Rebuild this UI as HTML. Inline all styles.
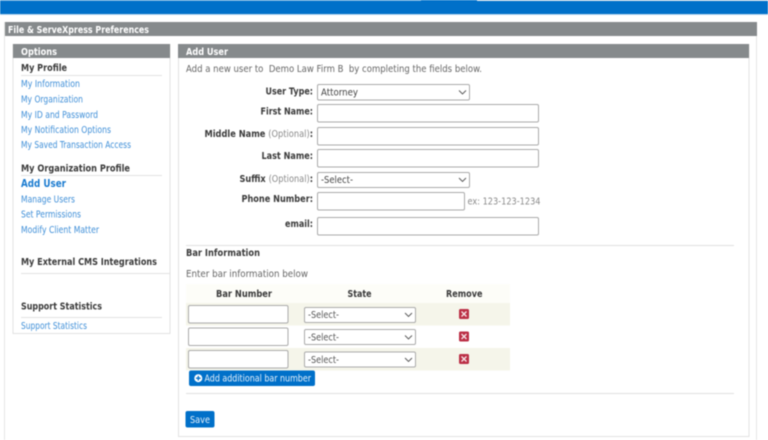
<!DOCTYPE html>
<html><head><meta charset="utf-8">
<style>
html,body{margin:0;padding:0;background:#fff;width:768px;height:440px;overflow:hidden}
svg{display:block;filter:blur(.42px)}
text{font-family:"DejaVu Sans","Liberation Sans",sans-serif;font-size:10px;fill:#666}
.h{font-weight:700;fill:#fff;font-size:10px}
.b{font-weight:700;fill:#3a3a3a;font-size:10px}
.l{fill:#3f8fd8;font-size:9.500px}
.g{fill:#8a8a8a}
.f{fill:#fff;stroke:#aaa;stroke-width:1}
.c{fill:none;stroke:#555;stroke-width:.9}
.s{fill:#555}
</style></head><body>
<svg width="768" height="440" viewBox="0 0 768 440" xmlns="http://www.w3.org/2000/svg">
<rect width="768" height="440" fill="#fff"/>
<!-- top bar -->
<rect width="768" height="14" fill="#0070c9"/>
<rect y="0" width="421" height="1" fill="#5fa5dc"/>
<rect x="477" y="0" width="291" height="1" fill="#cfdfeb"/>
<rect y="14" width="768" height="1" fill="#b5d6ee"/>
<!-- outer panel -->
<rect x="4.500" y="22.500" width="752" height="430" fill="#fff" stroke="#e6e6e6"/>
<rect x="5" y="22" width="752" height="14" fill="#868a8c"/>
<text class="h" x="8" y="33" textLength="141" lengthAdjust="spacingAndGlyphs">File &amp; ServeXpress Preferences</text>
<!-- left panel -->
<rect x="13" y="44.500" width="157" height="289" fill="#fff" stroke="#e2e2e2"/>
<rect x="13" y="44" width="157" height="14" fill="#868a8c"/>
<text class="h" x="21" y="55" textLength="36" lengthAdjust="spacingAndGlyphs">Options</text>
<text class="b" x="21" y="71" textLength="46" lengthAdjust="spacingAndGlyphs">My Profile</text>
<rect x="21" y="75" width="141" height="1" fill="#e2e2e2"/>
<text class="l" x="21" y="87" textLength="59" lengthAdjust="spacingAndGlyphs">My Information</text>
<text class="l" x="21" y="102.500" textLength="62" lengthAdjust="spacingAndGlyphs">My Organization</text>
<text class="l" x="21" y="118" textLength="77" lengthAdjust="spacingAndGlyphs">My ID and Password</text>
<text class="l" x="21" y="133" textLength="90" lengthAdjust="spacingAndGlyphs">My Notification Options</text>
<text class="l" x="21" y="148" textLength="110" lengthAdjust="spacingAndGlyphs">My Saved Transaction Access</text>
<text class="b" x="21" y="171.500" textLength="109" lengthAdjust="spacingAndGlyphs">My Organization Profile</text>
<rect x="21" y="175" width="141" height="1" fill="#e2e2e2"/>
<text x="21" y="187" textLength="45" lengthAdjust="spacingAndGlyphs" style="font-weight:700;fill:#1a7bd0;font-size:11px">Add User</text>
<text class="l" x="21" y="202.500" textLength="54" lengthAdjust="spacingAndGlyphs">Manage Users</text>
<text class="l" x="21" y="217.500" textLength="60" lengthAdjust="spacingAndGlyphs">Set Permissions</text>
<text class="l" x="21" y="233" textLength="78" lengthAdjust="spacingAndGlyphs">Modify Client Matter</text>
<text class="b" x="21" y="265" textLength="136" lengthAdjust="spacingAndGlyphs">My External CMS Integrations</text>
<rect x="21" y="273" width="149" height="1" fill="#e2e2e2"/>
<text class="b" x="21" y="309.500" textLength="81" lengthAdjust="spacingAndGlyphs">Support Statistics</text>
<rect x="21" y="317" width="141" height="1" fill="#e2e2e2"/>
<text class="l" x="21" y="329" textLength="66" lengthAdjust="spacingAndGlyphs">Support Statistics</text>
<!-- right panel -->
<rect x="178.500" y="44.500" width="570.500" height="392" fill="#fff" stroke="#e2e2e2"/>
<rect x="178" y="44" width="571" height="14" fill="#868a8c"/>
<text class="h" x="186" y="55" textLength="42" lengthAdjust="spacingAndGlyphs">Add User</text>
<text x="186" y="72" textLength="296" lengthAdjust="spacingAndGlyphs">Add a new user to &#160;Demo Law Firm B &#160;by completing the fields below.</text>
<!-- labels -->
<text class="b" x="265.500" y="94.500" textLength="47.500" lengthAdjust="spacingAndGlyphs">User Type:</text>
<text class="b" x="260.500" y="114.500" textLength="52.500" lengthAdjust="spacingAndGlyphs">First Name:</text>
<text class="b" x="204.500" y="137" textLength="108.500" lengthAdjust="spacingAndGlyphs">Middle Name <tspan style="font-weight:400;fill:#8a8a8a">(Optional)</tspan>:</text>
<text class="b" x="261.500" y="159" textLength="51.500" lengthAdjust="spacingAndGlyphs">Last Name:</text>
<text class="b" x="239.500" y="182" textLength="73.500" lengthAdjust="spacingAndGlyphs">Suffix <tspan style="font-weight:400;fill:#8a8a8a">(Optional)</tspan>:</text>
<text class="b" x="241.500" y="202" textLength="71.500" lengthAdjust="spacingAndGlyphs">Phone Number:</text>
<text class="b" x="285" y="227" textLength="28" lengthAdjust="spacingAndGlyphs">email:</text>
<!-- fields -->
<rect class="f" x="317.500" y="84.500" width="152" height="15.500" rx="1.500"/>
<text x="321" y="95.500" textLength="37" lengthAdjust="spacingAndGlyphs" style="fill:#444">Attorney</text>
<path class="c" d="M459 90.500l3.500 3.500 3.500-3.500"/>
<rect class="f" x="317.500" y="104.500" width="221" height="17.500" rx="1.500"/>
<rect class="f" x="317.500" y="127.500" width="221" height="17.500" rx="1.500"/>
<rect class="f" x="317.500" y="149.500" width="221" height="17.500" rx="1.500"/>
<rect class="f" x="317.500" y="172.500" width="152" height="15" rx="1.500"/>
<text x="321" y="183" textLength="32" lengthAdjust="spacingAndGlyphs" style="fill:#444">-Select-</text>
<path class="c" d="M459 178l3.500 3.500 3.500-3.500"/>
<rect class="f" x="317.500" y="192.500" width="147" height="17.500" rx="1.500"/>
<text class="g" x="467.500" y="204.500" textLength="73" lengthAdjust="spacingAndGlyphs">ex: 123-123-1234</text>
<rect class="f" x="317.500" y="217.500" width="221" height="17.500" rx="1.500"/>
<rect x="186" y="245" width="548" height="1" fill="#e0e0e0"/>
<text class="b" x="186" y="256" textLength="74" lengthAdjust="spacingAndGlyphs">Bar Information</text>
<text x="186" y="277" textLength="122" lengthAdjust="spacingAndGlyphs">Enter bar information below</text>
<!-- table -->
<rect x="186" y="284" width="324" height="19" fill="#fdfdf8"/>
<rect x="186" y="303" width="324" height="22.500" fill="#f5f5ea"/>
<rect x="186" y="348" width="324" height="22.500" fill="#f5f5ea"/>
<text class="b" x="216" y="297" textLength="56" lengthAdjust="spacingAndGlyphs">Bar Number</text>
<text class="b" x="347.500" y="297" textLength="24" lengthAdjust="spacingAndGlyphs">State</text>
<text class="b" x="446" y="297" textLength="36.500" lengthAdjust="spacingAndGlyphs">Remove</text>
<g id="rows">
<rect class="f" x="188.500" y="305.500" width="99.500" height="17.500" rx="1.500"/>
<rect class="f" x="304.500" y="307.500" width="111" height="15" rx="1.500"/>
<text x="308" y="318" textLength="31" lengthAdjust="spacingAndGlyphs" style="fill:#555">-Select-</text>
<path class="c" d="M405 313l3.500 3.500 3.500-3.500"/>
<rect x="459" y="309" width="10" height="10" rx="1.500" fill="#bb2f45"/>
<path d="M461.500 311.500l5 5M466.500 311.500l-5 5" stroke="#f6e4e6" stroke-width="1.400"/>

<rect class="f" x="188.500" y="328" width="99.500" height="17.500" rx="1.500"/>
<rect class="f" x="304.500" y="329.500" width="111" height="15" rx="1.500"/>
<text x="308" y="340.500" textLength="31" lengthAdjust="spacingAndGlyphs" style="fill:#555">-Select-</text>
<path class="c" d="M405 335.500l3.500 3.500 3.500-3.500"/>
<rect x="459" y="331.500" width="10" height="10" rx="1.500" fill="#bb2f45"/>
<path d="M461.500 334l5 5M466.500 334l-5 5" stroke="#f6e4e6" stroke-width="1.400"/>

<rect class="f" x="188.500" y="350.500" width="99.500" height="17.500" rx="1.500"/>
<rect class="f" x="304.500" y="352" width="111" height="15" rx="1.500"/>
<text x="308" y="363" textLength="31" lengthAdjust="spacingAndGlyphs" style="fill:#555">-Select-</text>
<path class="c" d="M405 358l3.500 3.500 3.500-3.500"/>
<rect x="459" y="354" width="10" height="10" rx="1.500" fill="#bb2f45"/>
<path d="M461.500 356.500l5 5M466.500 356.500l-5 5" stroke="#f6e4e6" stroke-width="1.400"/>
</g>
<!-- add button -->
<rect x="189" y="370.500" width="126" height="15.500" rx="2" fill="#0070c9"/>
<circle cx="198.300" cy="378.200" r="4" fill="#fff"/>
<path d="M196 378.200h4.600M198.300 375.900v4.600" stroke="#0070c9" stroke-width="1.300"/>
<text x="204.500" y="381.500" textLength="106.500" lengthAdjust="spacingAndGlyphs" style="fill:#e6f1fa;font-size:10px">Add additional bar number</text>
<rect x="186" y="393" width="548" height="1" fill="#e0e0e0"/>
<!-- save -->
<rect x="185.500" y="411" width="29" height="16.500" rx="2" fill="#0070c9"/>
<text x="190" y="423" textLength="20" lengthAdjust="spacingAndGlyphs" style="fill:#e6f1fa;font-size:10px">Save</text>
</svg>
</body></html>
